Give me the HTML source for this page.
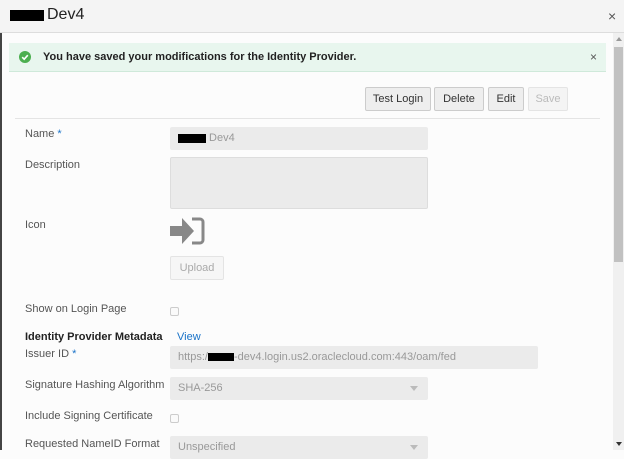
<!DOCTYPE html>
<html><head><style>
*{margin:0;padding:0;box-sizing:border-box}
body{width:624px;height:450px;overflow:hidden;background:#fcfcfc;font-family:"Liberation Sans",sans-serif;position:relative;color:#333}
.hdr{position:absolute;left:0;top:0;width:624px;height:33px;background:#f4f4f4;border-bottom:1px solid #ddd}
.ttl{position:absolute;left:47px;top:6px;font-size:16px;color:#222}
.red{position:absolute;background:#000}
.x{position:absolute;color:#555;font-size:14px}
.lb{position:absolute;left:0;top:33px;width:2px;height:417px;background:#444}
.sb{position:absolute;left:613px;top:33px;width:11px;height:417px;background:#f0f0f0}
.th{position:absolute;left:614px;top:47px;width:9px;height:215px;background:#c1c1c1}
.msg{position:absolute;left:9px;top:43px;width:597px;height:29px;background:#e8f6ee;border-bottom:1px solid #cfe9da}
.msg span{position:absolute;left:34px;top:8px;font-size:11px;font-weight:bold;color:#222}
.ok{position:absolute;left:10px;top:8px;width:12px;height:12px;border-radius:50%;background:#4caf50}
.btn{position:absolute;top:87px;height:24px;border:1px solid #ccc;background:#eee;font-size:11px;color:#333;text-align:center;line-height:22px;border-radius:2px}
.hr{position:absolute;left:15px;top:118px;width:585px;height:1px;background:#e4e4e4}
.l{position:absolute;left:25px;font-size:11px;color:#555}
.in{position:absolute;left:170px;background:#ebebeb;border-radius:2px;font-size:11px;color:#999;padding:5px 8px}
.cb{position:absolute;left:170px;width:9px;height:9px;border:1px solid #ccc;border-radius:2px;background:#fafafa}
.st{color:#1a73c8}
.ar{position:absolute;right:10px;top:9px;border-left:4px solid transparent;border-right:4px solid transparent;border-top:5px solid #bbb}
</style></head><body>
<div class="hdr"><div class="red" style="left:10px;top:10px;width:34px;height:11px"></div><div class="ttl">Dev4</div><div class="x" style="left:608px;top:8px">×</div></div>
<div class="lb"></div>
<div class="sb"><div style="position:absolute;left:3px;top:4px;border-left:3px solid transparent;border-right:3px solid transparent;border-bottom:4px solid #999"></div><div style="position:absolute;left:3px;bottom:4px;border-left:3px solid transparent;border-right:3px solid transparent;border-top:4px solid #333"></div></div>
<div class="th"></div>
<div class="msg"><div class="ok"><svg width="12" height="12" viewBox="0 0 12 12" style="position:absolute;left:0;top:0"><path d="M3.2 6.2l2 2 3.6-4" fill="none" stroke="#fff" stroke-width="1.6"/></svg></div><span>You have saved your modifications for the Identity Provider.</span><div class="x" style="left:581px;top:7px;font-size:12px">×</div></div>
<div class="btn" style="left:365px;width:66px">Test Login</div>
<div class="btn" style="left:434px;width:50px">Delete</div>
<div class="btn" style="left:488px;width:36px">Edit</div>
<div class="btn" style="left:528px;width:40px;color:#bbb;background:#f4f4f4;border-color:#e4e4e4">Save</div>
<div class="hr"></div>
<div class="l" style="top:128px">Name <span class="st">*</span></div>
<div class="in" style="top:127px;width:258px;height:23px"><span style="display:inline-block;width:28px;height:9px;background:#000;vertical-align:middle"></span> Dev4</div>
<div class="l" style="top:159px">Description</div>
<div class="in" style="top:157px;width:258px;height:52px;border:1px solid #ddd"></div>
<div class="l" style="top:219px">Icon</div>
<svg style="position:absolute;left:170px;top:216px" width="36" height="30" viewBox="0 0 36 30"><path d="M0 10h12V2l12 13-12 13v-8H0z" fill="#888"/><path d="M22 3h8a3 3 0 0 1 3 3v18a3 3 0 0 1-3 3h-8" fill="none" stroke="#888" stroke-width="3"/></svg>
<div class="btn" style="left:170px;top:256px;width:54px;color:#aaa;background:#f6f6f6;border-color:#e4e4e4">Upload</div>
<div class="l" style="top:303px">Show on Login Page</div>
<div class="cb" style="top:307px"></div>
<div class="l" style="top:331px;font-weight:bold;color:#222">Identity Provider Metadata</div>
<div class="l" style="left:177px;top:331px;color:#1a73c8">View</div>
<div class="l" style="top:348px">Issuer ID <span class="st">*</span></div>
<div class="in" style="top:346px;width:368px;height:23px">https:/<span style="display:inline-block;width:26px;height:8px;background:#000;vertical-align:middle"></span>-dev4.login.us2.oraclecloud.com:443/oam/fed</div>
<div class="l" style="top:379px">Signature Hashing Algorithm</div>
<div class="in" style="top:377px;width:258px;height:23px">SHA-256<div class="ar"></div></div>
<div class="l" style="top:410px">Include Signing Certificate</div>
<div class="cb" style="top:414px"></div>
<div class="l" style="top:438px">Requested NameID Format</div>
<div class="in" style="top:436px;width:258px;height:23px">Unspecified<div class="ar"></div></div>
</body></html>
